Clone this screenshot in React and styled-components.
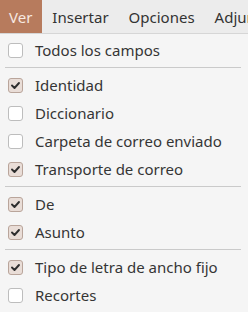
import React from 'react'
import styled, { createGlobalStyle } from 'styled-components'

const Global = createGlobalStyle`
  html, body { margin: 0; padding: 0; background: #f5f5f5; }
  body { font-family: "Noto Sans", "Open Sans", sans-serif; }
`

const Page = styled.div`
  width: 248px;
  height: 312px;
  overflow: hidden;
  background: #f5f5f5;
`

const MenuBar = styled.div`
  display: flex;
  height: 33px;
  background: #ececec;
  border-bottom: 1px solid #d6d6d6;
  white-space: nowrap;
  overflow: hidden;
`

const MenuItem = styled.div`
  display: flex;
  align-items: center;
  padding: 0 10px 0 ${p => (p.$first ? 9 : 10)}px;
  font-size: 15px;
  color: ${p => (p.$active ? '#f6e9e1' : '#333')};
  background: ${p => (p.$active ? '#b77b5d' : 'transparent')};
`

const List = styled.div`
  display: flex;
  flex-direction: column;
  padding-top: 2px;
`

const Row = styled.div`
  display: flex;
  align-items: center;
  gap: 12px;
  height: 28px;
  padding-left: 8px;
  font-size: 15px;
  color: #353535;
  white-space: nowrap;
`

const Box = styled.span`
  display: flex;
  align-items: center;
  justify-content: center;
  width: 13px;
  height: 13px;
  border: 1px solid ${p => (p.$checked ? '#b9a59b' : '#bdbdbd')};
  border-radius: 3px;
  background: ${p => (p.$checked ? '#e9ddd7' : '#ffffff')};
`

const Separator = styled.div`
  height: 1px;
  margin: 3px 7px 3px 5px;
  background: #cacaca;
`

const Check = () => (
  <svg width="11" height="11" viewBox="0 0 11 11">
    <path d="M2 5.5 L4.5 8 L9 3" fill="none" stroke="#2e2e2e" strokeWidth="1.9" strokeLinecap="round" strokeLinejoin="round" />
  </svg>
)

const groups = [
  [['Todos los campos', false]],
  [
    ['Identidad', true],
    ['Diccionario', false],
    ['Carpeta de correo enviado', false],
    ['Transporte de correo', true],
  ],
  [
    ['De', true],
    ['Asunto', true],
  ],
  [
    ['Tipo de letra de ancho fijo', true],
    ['Recortes', false],
  ],
]

export default function App() {
  return (
    <Page>
      <Global />
      <MenuBar>
        <MenuItem $active $first>Ver</MenuItem>
        <MenuItem>Insertar</MenuItem>
        <MenuItem>Opciones</MenuItem>
        <MenuItem>Adjuntos</MenuItem>
      </MenuBar>
      <List>
        {groups.map((g, gi) => (
          <React.Fragment key={gi}>
            {gi > 0 && <Separator />}
            {g.map(([label, checked]) => (
              <Row key={label}>
                <Box $checked={checked}>{checked && <Check />}</Box>
                {label}
              </Row>
            ))}
          </React.Fragment>
        ))}
      </List>
    </Page>
  )
}
